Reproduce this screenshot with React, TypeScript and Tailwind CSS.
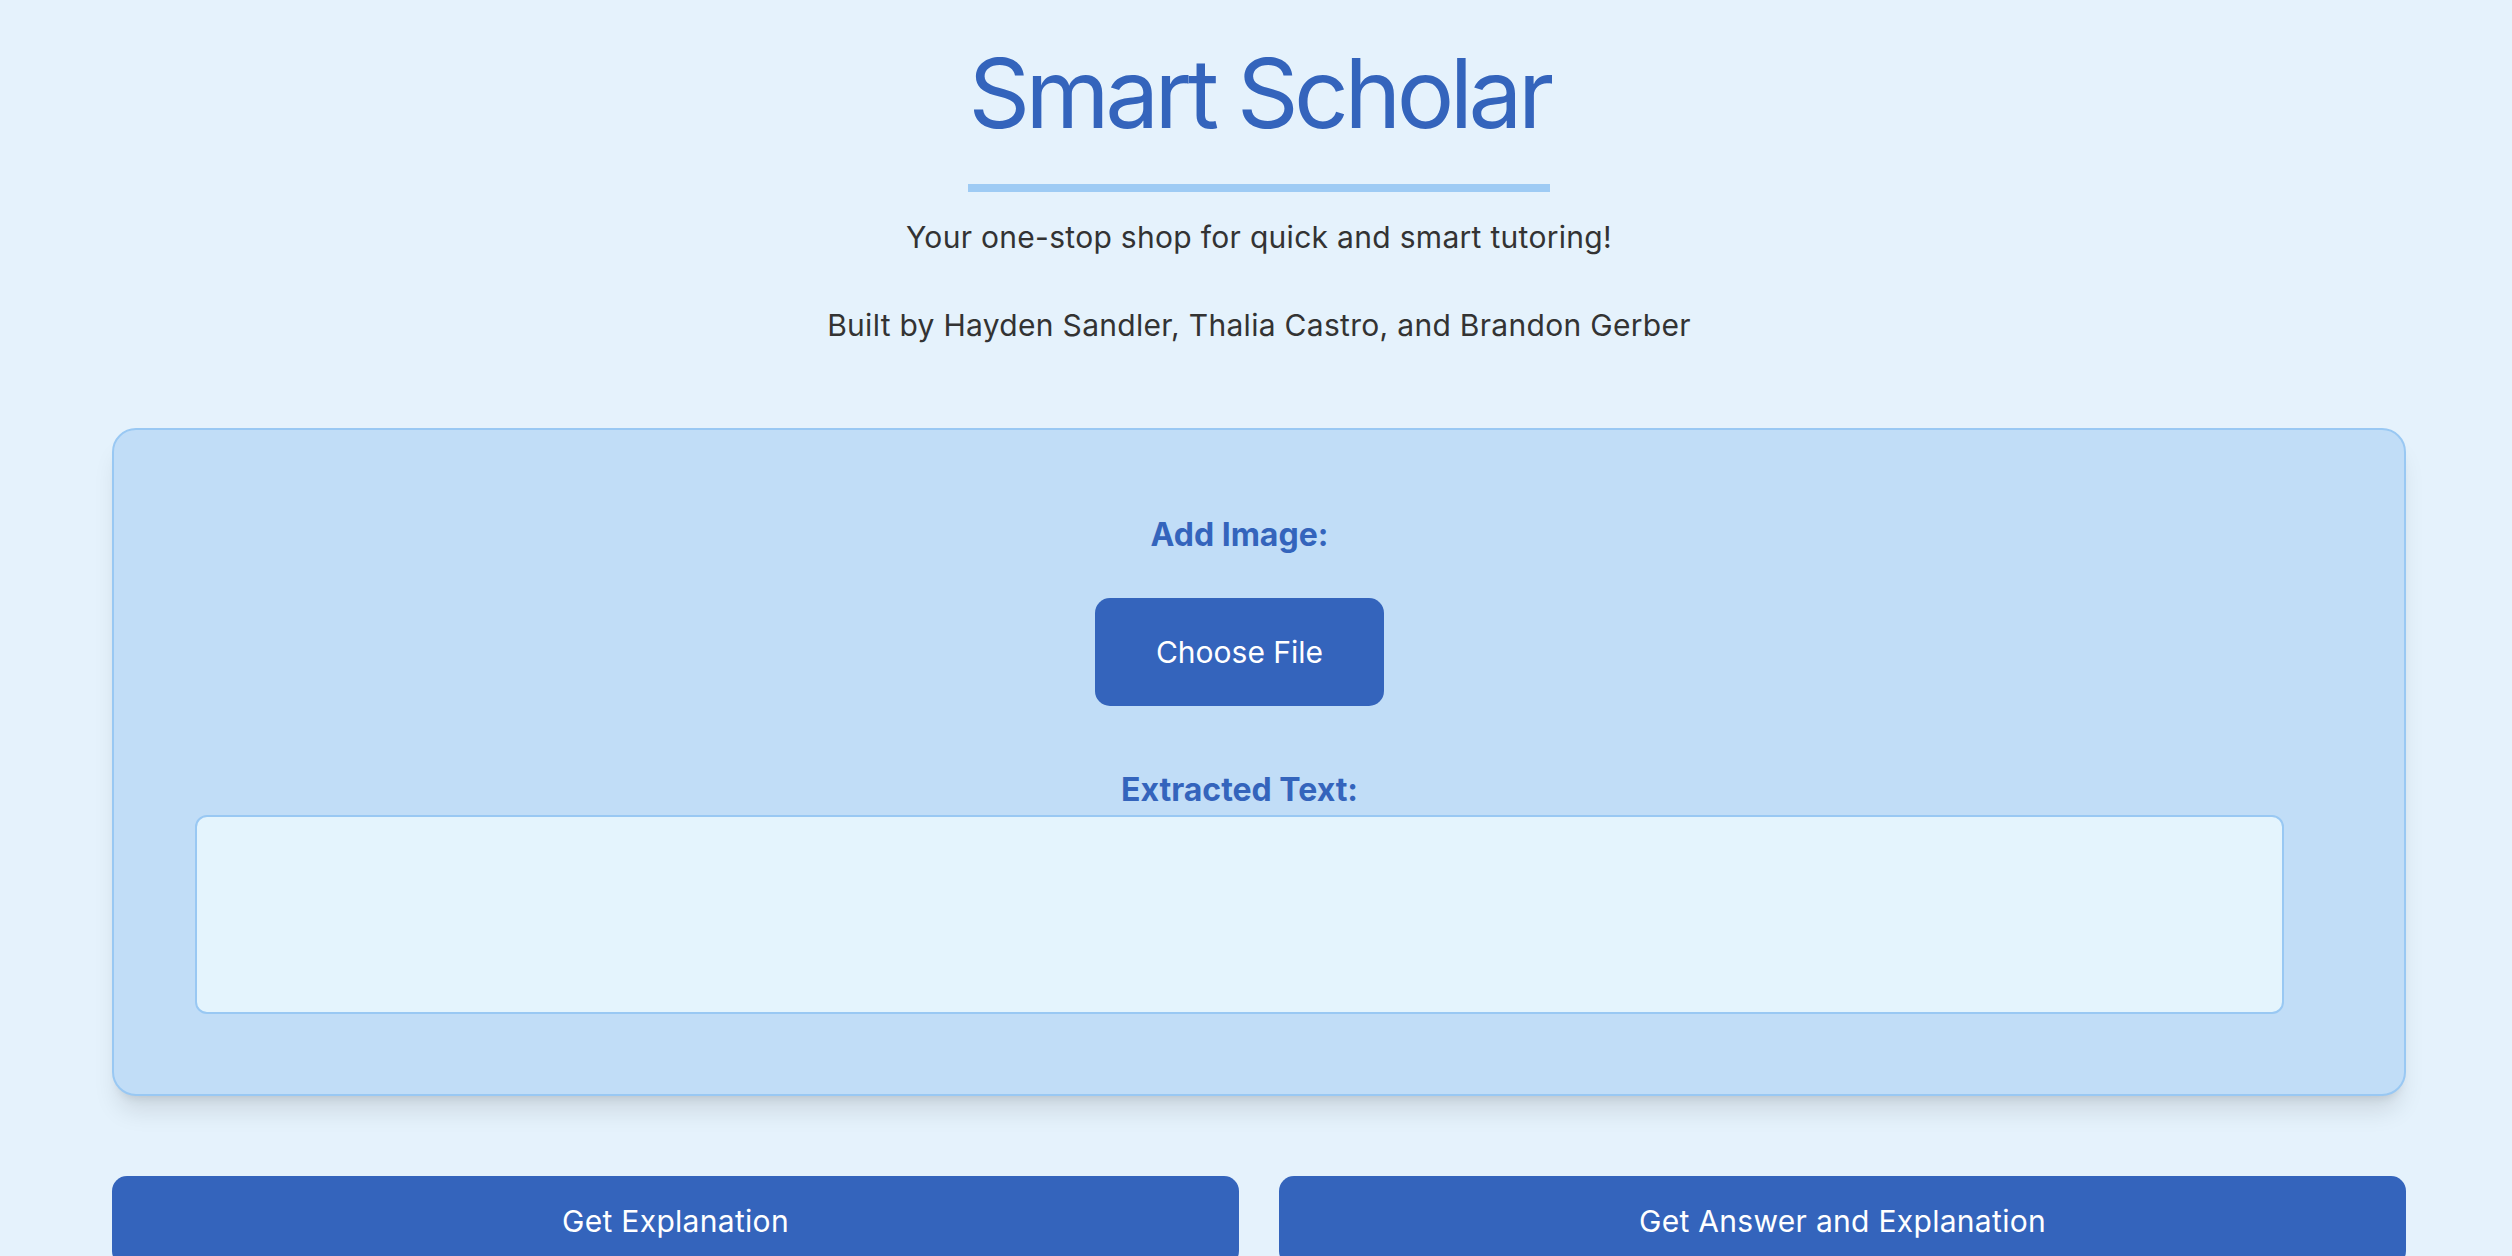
import { useState } from 'react'

export default function App() {
  const [text, setText] = useState('')

  return (
    <div
      className="min-h-screen bg-[#e5f2fc] pl-[112px] pr-[106px] pt-[45px] text-[#333333]"
      style={{ fontFamily: 'Inter, "Noto Sans", sans-serif' }}
    >
      {/* Header */}
      <header className="flex flex-col items-center text-center">
        <h1 className="inline-block border-b-8 border-[#9ecbf4] pb-[43px] text-8xl font-normal leading-none tracking-[-0.047em] text-[#3464bc]">
          Smart Scholar
        </h1>
        <p className="mt-[27px] text-3xl tracking-[0.01em]">Your one-stop shop for quick and smart tutoring!</p>
        <p className="mt-[52px] text-3xl tracking-[0.01em]">Built by Hayden Sandler, Thalia Castro, and Brandon Gerber</p>
      </header>

      {/* Upload card */}
      <section className="mt-[85px] flex flex-col items-center rounded-3xl border-2 border-[#99c8f3] bg-[#c1ddf7] pt-[87px] pb-[80px] pl-[81px] pr-[120px] shadow-xl">
        <label className="text-[32px] font-bold leading-9 text-[#3464bc]">Add Image:</label>
        <button className="mt-[45px] rounded-[15px] bg-[#3464bc] px-[61px] py-[36px] text-3xl text-white">
          Choose File
        </button>
        <label className="mt-[66px] text-[32px] font-bold leading-9 text-[#3464bc]">Extracted Text:</label>
        <textarea
          value={text}
          onChange={(e) => setText(e.target.value)}
          className="mt-[7px] h-[199px] w-full resize-none rounded-xl border-2 border-[#99c8f3] bg-[#e4f4fd] p-4 text-3xl outline-none"
        />
      </section>

      {/* Actions */}
      <div className="mt-[80px] grid grid-cols-2 gap-[40px]">
        <button className="rounded-[15px] bg-[#3464bc] py-[27px] text-3xl tracking-[0.01em] text-white">Get Explanation</button>
        <button className="rounded-[15px] bg-[#3464bc] py-[27px] text-3xl tracking-[0.01em] text-white">Get Answer and Explanation</button>
      </div>
    </div>
  )
}
